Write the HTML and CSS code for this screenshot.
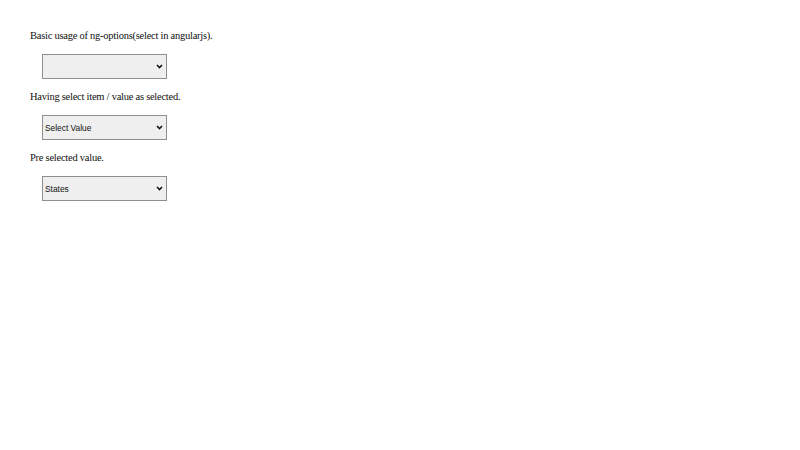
FILE: index.html
```html
<!DOCTYPE html>
<html>
<head>
<meta charset="utf-8">
<link rel="stylesheet" href="styles.css">
</head>
<body>
<div class="page">
  <p class="label">Basic usage of ng-options(select in angularjs).</p>
  <div class="field">
    <span class="wrap"><select class="sel"><option></option></select><svg class="chev" width="7" height="5" viewBox="0 0 7 5"><path d="M1 1 L3.5 3.5 L6 1" fill="none" stroke="#111" stroke-width="1.6"/></svg></span>
  </div>
  <p class="label">Having select item / value as selected.</p>
  <div class="field">
    <span class="wrap"><select class="sel"><option>Select Value</option></select><svg class="chev" width="7" height="5" viewBox="0 0 7 5"><path d="M1 1 L3.5 3.5 L6 1" fill="none" stroke="#111" stroke-width="1.6"/></svg></span>
  </div>
  <p class="label">Pre selected value.</p>
  <div class="field">
    <span class="wrap"><select class="sel"><option>States</option></select><svg class="chev" width="7" height="5" viewBox="0 0 7 5"><path d="M1 1 L3.5 3.5 L6 1" fill="none" stroke="#111" stroke-width="1.6"/></svg></span>
  </div>
</div>
</body>
</html>
```
FILE: styles.css
```css
html, body { margin: 0; padding: 0; background: #fff; }
.page {
  padding: 29px 30px;
  font-family: "Liberation Serif", serif;
  font-size: 10.5px;
  letter-spacing: -0.25px;
  color: #111;
}
.label { margin: 0; line-height: 14px; }
.field { padding: 11px 0 11px 12px; }
.wrap { position: relative; display: inline-block; vertical-align: top; }
.sel {
  -webkit-appearance: none;
  appearance: none;
  display: block;
  box-sizing: border-box;
  width: 125px;
  height: 25px;
  margin: 0;
  padding: 0 14px 0 2px;
  border: 1px solid #8f8f8f;
  border-radius: 0;
  background: #efefef;
  color: #111;
  font-family: "Liberation Sans", sans-serif;
  font-size: 8.4px;
  letter-spacing: 0;
}
.chev { position: absolute; right: 4px; top: 10px; pointer-events: none; }
```
